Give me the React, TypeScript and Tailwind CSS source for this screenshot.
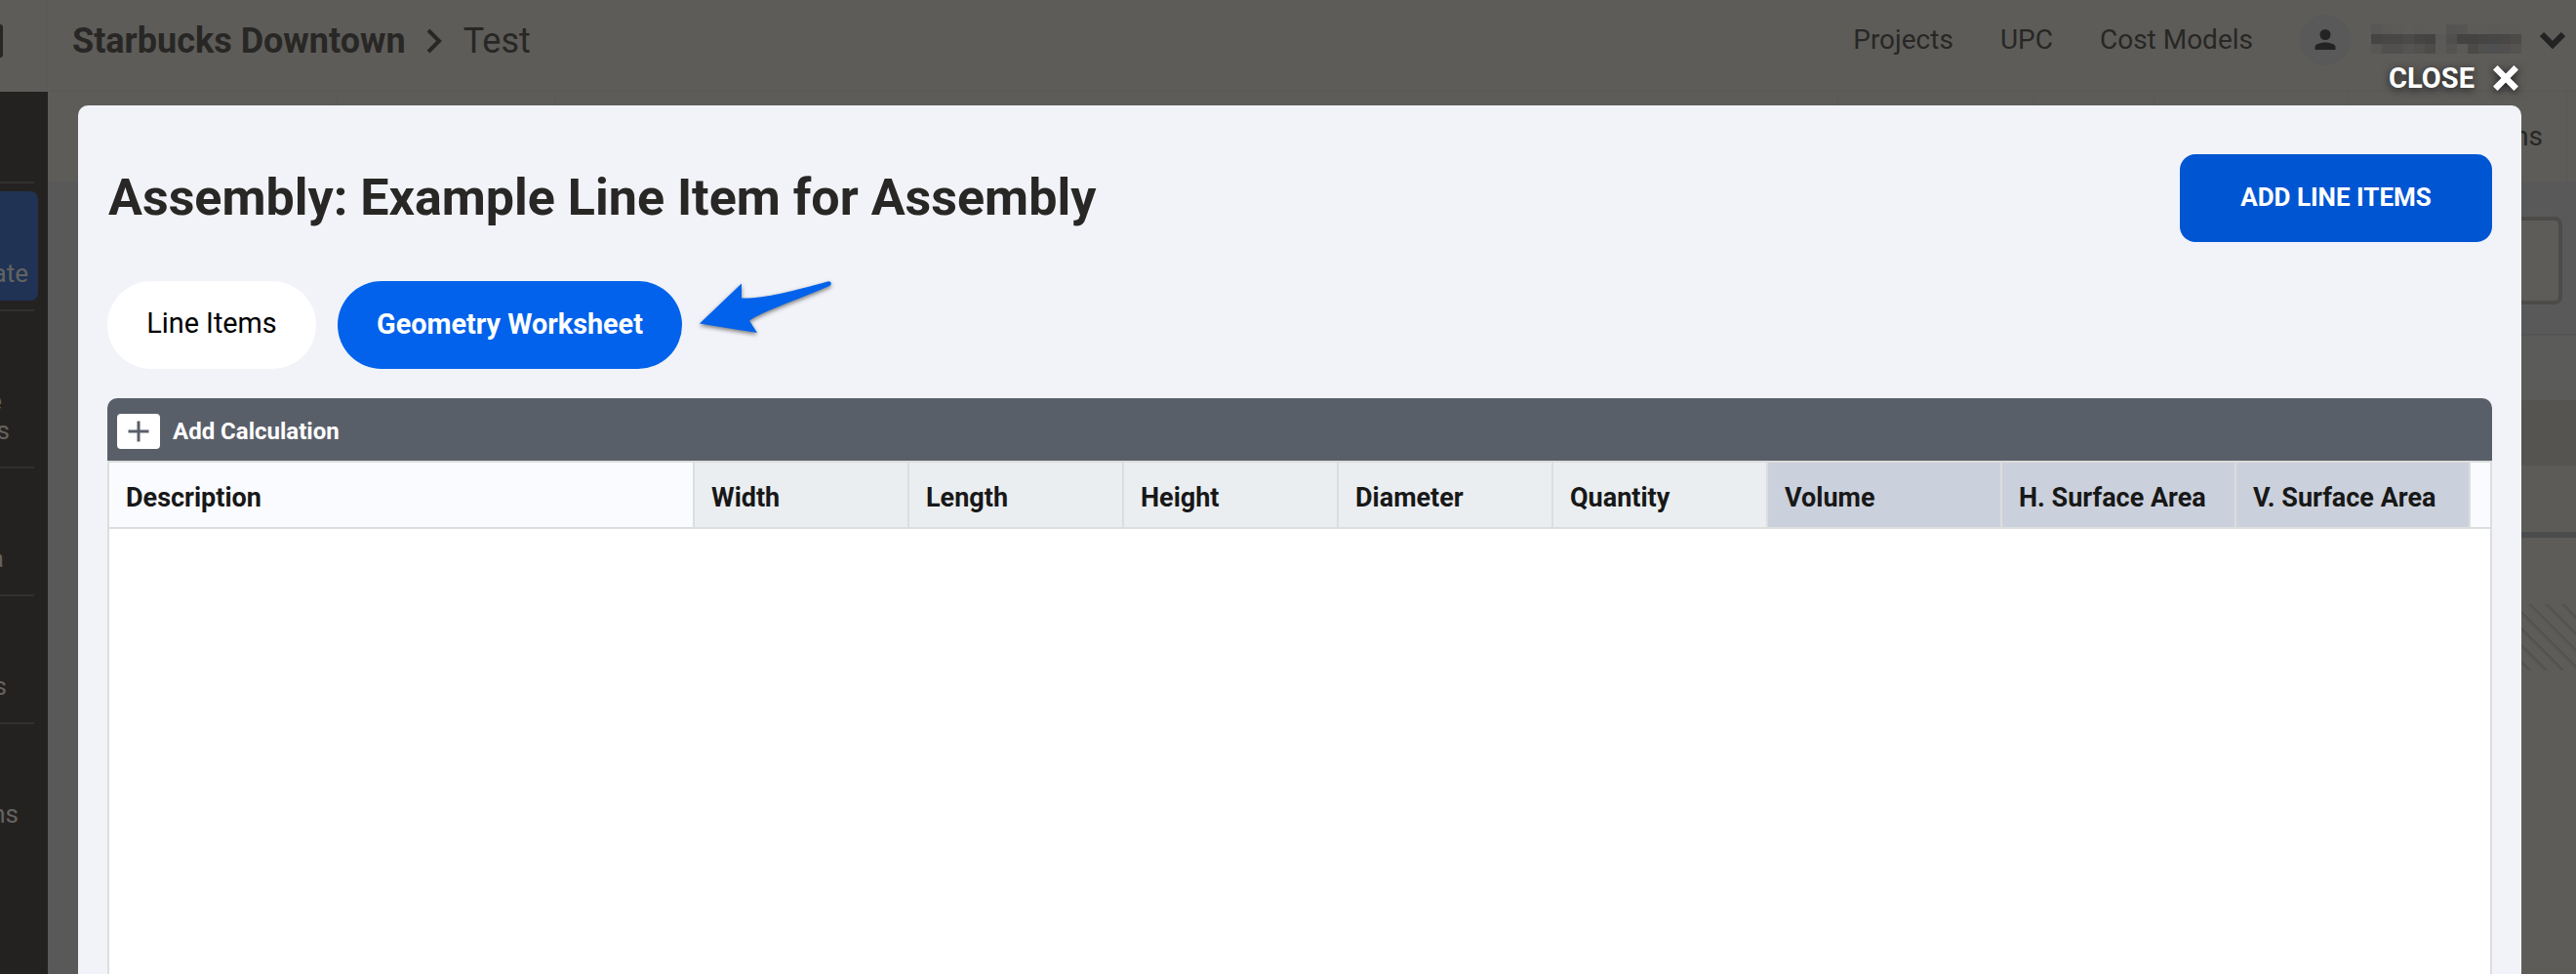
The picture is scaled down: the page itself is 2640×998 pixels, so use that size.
import React from "react";

const tabs = [
  { w: "w-[297px]" }, { w: "w-[224px]" }, { w: "w-[1314px]" }, { w: "w-[201px]" }, { w: "w-[124px]" }, { w: "w-[199px]" },
];

const columns = [
  { label: "Description", cls: "w-[600px] bg-[#fafbff]" },
  { label: "Width", cls: "w-[220px] bg-[#eaeef1]" },
  { label: "Length", cls: "w-[220px] bg-[#eaeef1]" },
  { label: "Height", cls: "w-[220px] bg-[#eaeef1]" },
  { label: "Diameter", cls: "w-[220px] bg-[#eaeef1]" },
  { label: "Quantity", cls: "w-[220px] bg-[#eaeef1]" },
  { label: "Volume", cls: "w-[240px] bg-[#cbd1dc]" },
  { label: "H. Surface Area", cls: "w-[240px] bg-[#cbd1dc]" },
  { label: "V. Surface Area", cls: "w-[240px] bg-[#cbd1dc]" },
];

const blurCells = [
  ["#585755", "#5a5957", "#5c5b58", "#5d5c59", "#5b5b59", "#5d5c59", "#5d5c59", "#555453", "#565553", "#5c5b58", "#5c5b58", "#5a5a59", "#5c5b58", "#5c5b58"],
  ["#454442", "#484745", "#484745", "#4b4a48", "#464543", "#444341", "#5a5957", "#504f4d", "#444341", "#444341", "#464544", "#464646", "#484745", "#4c4b49"],
  ["#585755", "#51504e", "#51504e", "#555452", "#525150", "#4d4c4a", "#5b5a58", "#555452", "#5b5a57", "#4b4a48", "#50504f", "#4e4f50", "#51504e", "#545351"],
];

function SideItem({ label, box }: { label: string; box: string }) {
  return (
    <div className={`flex w-[35px] shrink-0 flex-col items-end justify-end border-b-2 border-[#31302e] text-[26px] leading-[30px] text-[#646361] ${box}`}>
      <span>{label}</span>
    </div>
  );
}

function Backdrop() {
  return (
    <div className="flex h-[998px] w-[2640px] flex-col bg-[#595959]">
      <header className="flex h-[94px] shrink-0 bg-[#5d5c59] text-[#282725]">
        <div className="flex h-[94px] w-[47px] shrink-0 pt-[25px]">
          <div className="h-[34px] w-[3px] rounded-r-[3px] bg-[#282725]" />
        </div>
        <div className="flex flex-1 items-center border-b-2 border-l-2 border-[#5a5a5a] pb-[8px] pl-[25px]">
          <span className="text-[36px] font-bold">Starbucks Downtown</span>
          <svg className="ml-[21px] h-[26px] w-[17px]" viewBox="0 0 17 26" fill="none" stroke="#282725" strokeWidth="4">
            <path d="M2 2L13 13L2 24" />
          </svg>
          <span className="ml-[21px] text-[36px]">Test</span>
          <nav className="mb-[3px] ml-auto flex items-center text-[28px]">
            <span>Projects</span>
            <span className="ml-[48px]">UPC</span>
            <span className="ml-[48px]">Cost Models</span>
          </nav>
          <div className="mb-[2px] ml-[48px] flex h-[52px] w-[52px] items-center justify-center rounded-full bg-[#595959]">
            <svg className="h-[22px] w-[22px]" viewBox="0 0 22 22" fill="#232323">
              <circle cx="11" cy="5.5" r="5.5" />
              <path d="M0.500 21V18C0.500 15 7 13.500 11 13.500S21.500 15 21.500 18V21Z" />
            </svg>
          </div>
          <div className="mb-[5px] ml-[21px] flex flex-col">
            {blurCells.map((r, i) => (
              <div key={i} className="flex">
                {r.map((c, j) => (
                  <div key={j} className="h-[10px] w-[11px]" style={{ backgroundColor: c }} />
                ))}
              </div>
            ))}
          </div>
          <svg className="ml-[19px] mr-[11px] h-[18px] w-[26px]" viewBox="0 0 26 18" fill="none" stroke="#232323" strokeWidth="6">
            <path d="M2 2L13 13L24 2" />
          </svg>
        </div>
      </header>
      <div className="flex flex-1">
        <aside className="flex w-[49px] shrink-0 flex-col overflow-hidden bg-[#242220]">
          <div className="h-[94px] w-[35px] shrink-0 border-b-2 border-[#31302e]" />
          <div className="mt-[8px] flex h-[112px] w-[39px] shrink-0 items-end justify-end rounded-r-[8px] bg-[#203354] pb-[13px] pr-[10px] text-[26px] leading-[30px] text-[#646361]">ate</div>
          <div className="h-[11px] w-[35px] shrink-0 border-b-2 border-[#31302e]" />
          <div className="flex h-[161px] w-[35px] shrink-0 flex-col items-end justify-end border-b-2 border-[#31302e] pb-[22px] text-[26px] leading-[30px] text-[#646361]">
            <span className="mr-[33px]">e</span>
            <span className="mr-[25px]">s</span>
          </div>
          <SideItem label="a" box="h-[131px] pb-[22px] pr-[31px]" />
          <SideItem label="s" box="h-[131px] pb-[22px] pr-[28px]" />
          <div className="flex h-[107px] w-[35px] shrink-0 items-end justify-end pr-[16px] text-[26px] leading-[30px] text-[#646361]">ns</div>
        </aside>
        <main className="flex flex-1 flex-col">
          <div className="flex h-[92px] shrink-0 bg-[#5d5c59]">
            {tabs.map((t, i) => (
              <div key={i} className={`shrink-0 border-r-2 border-[#5a5a5a] ${t.w}`} />
            ))}
            <div className="flex w-[224px] shrink-0 items-center justify-end border-r-2 border-[#5a5a5a] pr-[24px] text-[28px] text-[#282725]">Items</div>
          </div>
          <div className="flex flex-1 flex-col pl-[34px]">
            <div className="flex h-[158px] shrink-0 flex-col items-end border-b-2 border-[#545452] pr-[14px] pt-[36px]">
              <div className="h-[90px] w-[300px] rounded-[8px] border-4 border-[#4c4b4a] bg-[#5d5c59]" />
            </div>
            <div className="h-[66px] shrink-0 bg-[#5b5b5a]" />
            <div className="h-[67px] shrink-0 bg-[#565451]" />
            <div className="h-[74px] shrink-0 border-b-6 border-[#4a4c4d] bg-[#5c5b58]" />
            <div className="flex flex-1 flex-col bg-[#5d5c59] pt-[68px]">
              <div className="h-[68px] bg-[repeating-linear-gradient(45deg,#5d5c59_0px,#5d5c59_8px,#50504e_11.5px,#5d5c59_12px)]" />
            </div>
          </div>
        </main>
      </div>
    </div>
  );
}

export default function App() {
  return (
    <div className="relative h-[998px] w-[2640px] overflow-hidden font-['Roboto',sans-serif]">
      <Backdrop />
      <div className="absolute inset-0 flex flex-col pl-[80px] pr-[56px]">
        <div className="flex h-[108px] shrink-0 items-end justify-end pb-[11px] pr-[3px] text-white">
          <span className="text-[29px] font-bold leading-[34px] [text-shadow:0_2px_8px_rgba(0,0,0,0.7)]">CLOSE</span>
          <svg className="mb-[4px] ml-[19px] h-[26px] w-[26px] overflow-visible drop-shadow-[0_2px_4px_rgba(0,0,0,0.7)]" viewBox="0 0 26 26" stroke="white" strokeWidth="6.500">
            <path d="M2.300 2.300L23.700 23.700M23.700 2.300L2.300 23.700" />
          </svg>
        </div>
        <section className="flex flex-1 flex-col rounded-t-[10px] bg-[#f1f3f8] px-[30px] pt-[50px]">
          <div className="flex h-[90px] items-center justify-between">
            <h1 className="pl-px text-[52px] font-bold text-[#282725]">Assembly: Example Line Item for Assembly</h1>
            <button className="flex h-[90px] w-[320px] items-center justify-center rounded-[16px] bg-[#0055d2] pb-[2px] text-[26px] font-bold text-white">ADD LINE ITEMS</button>
          </div>
          <div className="mt-[40px] flex h-[90px] items-start">
            <button className="h-[90px] w-[214px] rounded-full bg-white pb-[2px] text-[28.8px] text-black">Line Items</button>
            <button className="ml-[22px] h-[90px] w-[353px] rounded-full bg-[#0262eb] text-[28.8px] font-bold text-white">Geometry Worksheet</button>
            <svg className="ml-[11px] h-[70px] w-[160px] drop-shadow-[0_2px_2px_rgba(0,0,0,0.5)]" viewBox="710 288 160 70" fill="#0262eb">
              <path d="M717 331.500L760 290.500V305.500C784 306 810 299 849 288.300C852 288 853 291.500 850 293C815 308 782 319 768 328.500L776 341Z" />
            </svg>
          </div>
          <div className="mt-[30px] flex h-[64px] shrink-0 items-center rounded-t-[10px] bg-[#595f69] pl-[10px]">
            <div className="mt-[4px] flex h-[36px] w-[44px] items-center justify-center rounded-[4px] bg-white">
              <svg className="h-[22px] w-[22px]" viewBox="0 0 22 22" stroke="#595f69" strokeWidth="3">
                <path d="M11 0.500V21.500M0.500 11H21.500" />
              </svg>
            </div>
            <span className="ml-[13px] mt-[4px] text-[24px] font-bold text-white">Add Calculation</span>
          </div>
          <div className="flex flex-1 flex-col border-x-2 border-t-2 border-[#dcdddd] bg-white">
            <div className="flex h-[68px] shrink-0 border-b-2 border-[#dcdddd] bg-[#fafbff] text-[27px] font-bold text-[#181818]">
              {columns.map((c) => (
                <div key={c.label} className={`flex shrink-0 items-center border-r-2 border-[#dcdddd] pl-[17px] pt-[6px] ${c.cls}`}>
                  {c.label}
                </div>
              ))}
            </div>
          </div>
        </section>
      </div>
    </div>
  );
}
